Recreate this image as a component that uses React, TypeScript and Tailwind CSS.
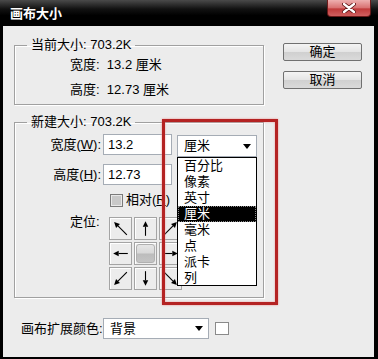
import React from 'react';

const units = ['百分比', '像素', '英寸', '厘米', '毫米', '点', '派卡', '列'];

// arrow directions for the 3x3 anchor grid, null = centre
const arrows: ([number, number] | null)[] = [
  [-1, -1], [0, -1], [1, -1],
  [-1, 0], null, [1, 0],
  [-1, 1], [0, 1], [1, 1],
];

function Arrow({ dx, dy }: { dx: number; dy: number }) {
  const diag = dx !== 0 && dy !== 0;
  const len = diag ? 7 : 8;
  const x1 = 11.5 - dx * len;
  const y1 = 11.5 - dy * len;
  const x2 = 11.5 + dx * len;
  const y2 = 11.5 + dy * len;
  const ang = Math.atan2(dy, dx);
  const hx = x2 - Math.cos(ang) * 6;
  const hy = y2 - Math.sin(ang) * 6;
  const px = -Math.sin(ang) * 3;
  const py = Math.cos(ang) * 3;
  return (
    <svg width="23" height="23" viewBox="0 0 23 23">
      <line x1={x1} y1={y1} x2={hx} y2={hy} stroke="#000" strokeWidth="1.2" />
      <polygon points={`${x2},${y2} ${hx + px},${hy + py} ${hx - px},${hy - py}`} fill="#000" />
    </svg>
  );
}

function Caret() {
  return (
    <svg width="8" height="5" viewBox="0 0 8 5">
      <polygon points="0,0 8,0 4,5" fill="#000" />
    </svg>
  );
}

export default function App() {
  return (
    <div className="w-[378px] h-[359px] bg-black flex flex-col overflow-hidden text-[13px] leading-[16px] text-black font-['Liberation_Sans','Noto_Sans_CJK_SC',sans-serif]">
      {/* title bar */}
      <div className="h-[26px] flex items-start shrink-0 bg-[linear-gradient(to_bottom,#4a4a4a_0%,#111_35%,#000_60%)]">
        <span className="ml-[10px] mt-[7px] text-white font-bold text-[13px] leading-[14px]">画布大小</span>
        <div className="ml-auto mr-[7px] w-[44px] h-[17px] rounded-b-[4px] border border-t-0 border-[#6b1a1a] bg-[linear-gradient(to_bottom,#eeb0b0_0%,#d87070_50%,#c03a3a_55%,#d06060_100%)] flex items-center justify-center">
          <svg width="14" height="10" viewBox="0 0 14 10">
            <path d="M2 1 L12 9 M12 1 L2 9" stroke="#5a1010" strokeWidth="4" strokeLinecap="round" />
            <path d="M2 1 L12 9 M12 1 L2 9" stroke="#fff" strokeWidth="2.4" strokeLinecap="round" />
          </svg>
        </div>
      </div>

      {/* client area */}
      <div className="relative flex-1 ml-[3px] mr-[4px] mb-[2px] bg-[#ececec] flex flex-col">
        <div className="flex">
          <div className="flex flex-col ml-[11px] mt-[11px]">
            <fieldset className="w-[250px] h-[68px] border border-[#a0a0a0] shadow-[1px_1px_0_#fff,inset_1px_1px_0_#fff]">
              <legend className="ml-[12px] px-[4px]">当前大小: 703.2K</legend>
              <div className="pl-[55px] pt-[2px] flex flex-col">
                <div className="h-[20px] flex items-center">宽度:&nbsp;&nbsp;13.2 厘米</div>
                <div className="h-[20px] mt-[5px] flex items-center">高度:&nbsp;&nbsp;12.73 厘米</div>
              </div>
            </fieldset>

            <fieldset className="mt-[9px] w-[250px] h-[184px] border border-[#a0a0a0] shadow-[1px_1px_0_#fff,inset_1px_1px_0_#fff]">
              <legend className="ml-[12px] px-[4px]">新建大小: 703.2K</legend>
              <div className="flex flex-col pt-[4px]">
                <div className="flex items-start h-[22px]">
                  <span className="w-[86px] h-[21px] flex items-center justify-end">宽度(<u>W</u>):</span>
                  <div className="ml-[2px] w-[69px] h-[21px] bg-white border border-[#a5acb5] flex items-center pl-[4px]">13.2</div>
                  <div className="ml-[5px] mt-[1px] w-[80px] h-[22px] bg-white border border-[#a5acb5] flex items-center pl-[6px] pr-[5px]">
                    <span>厘米</span>
                    <span className="ml-auto flex"><Caret /></span>
                  </div>
                </div>
                <div className="flex items-start h-[21px] mt-[8px]">
                  <span className="w-[86px] h-[21px] flex items-center justify-end">高度(<u>H</u>):</span>
                  <div className="ml-[2px] w-[69px] h-[21px] bg-white border border-[#a5acb5] flex items-center pl-[4px]">12.73</div>
                </div>
                <div className="flex items-center h-[14px] mt-[8px] pl-[95px]">
                  <div className="w-[13px] h-[13px] border border-[#7a7a7a] bg-[#c8c8c8] shadow-[inset_0_0_0_1px_#e8e8e8]" />
                  <span className="ml-[3px]">相对(<u>R</u>)</span>
                </div>
                <div className="flex items-start mt-[10px]">
                  <span className="w-[94px] pl-[55px] mt-[-3px] whitespace-nowrap">定位:</span>
                  <div className="grid grid-cols-[23px_23px_23px] grid-rows-[23px_23px_23px] gap-[2px]">
                    {arrows.map((a, i) => (
                      <div key={i} className="border border-[#a4a4a4] bg-[#ececec] shadow-[inset_1px_1px_0_#fff] flex items-center justify-center">
                        {a ? (
                          <Arrow dx={a[0]} dy={a[1]} />
                        ) : (
                          <div className="w-[19px] h-[19px] rounded-[3px] border border-[#b0b0b0] bg-[linear-gradient(to_bottom,#e6e6e6_0%,#d8d8d8_48%,#bcbcbc_52%,#c4c4c4_100%)]" />
                        )}
                      </div>
                    ))}
                  </div>
                </div>
              </div>
            </fieldset>
          </div>

          <div className="ml-[19px] mt-[17px] flex flex-col gap-[10px]">
            {['确定', '取消'].map((t) => (
              <div key={t} className="w-[79px] h-[18px] rounded-[2px] border border-[#707070] bg-[linear-gradient(to_bottom,#f4f4f4_0%,#e4e4e4_50%,#d0d0d0_52%,#dadada_100%)] flex items-center justify-center leading-[14px]">
                {t}
              </div>
            ))}
          </div>
        </div>

        {/* canvas extension colour */}
        <div className="flex items-center mt-[20px] pl-[18px]">
          <span className="w-[82px] whitespace-nowrap">画布扩展颜色:</span>
          <div className="w-[106px] h-[21px] bg-white border border-[#a5acb5] flex items-center pl-[6px] pr-[5px]">
            <span>背景</span>
            <span className="ml-auto flex"><Caret /></span>
          </div>
          <div className="ml-[6px] w-[14px] h-[13px] bg-white border border-[#8a8a8a]" />
        </div>

        {/* open unit list */}
        <div className="absolute left-[174px] top-[131px] w-[80px] h-[129px] bg-white border border-black flex flex-col">
          {units.map((u) => (
            <div
              key={u}
              className={`h-[16px] pl-[6px] flex items-center ${u === '厘米' ? 'bg-black text-white outline outline-1 outline-dotted outline-[#888] -outline-offset-1' : ''}`}
            >
              {u}
            </div>
          ))}
        </div>

        {/* red highlight frame */}
        <div className="absolute left-[159px] top-[93px] w-[116px] h-[186px] border-[3px] border-[#b42222] shadow-[0_0_2px_#e89090,inset_0_0_2px_#e89090] pointer-events-none" />
      </div>
    </div>
  );
}
